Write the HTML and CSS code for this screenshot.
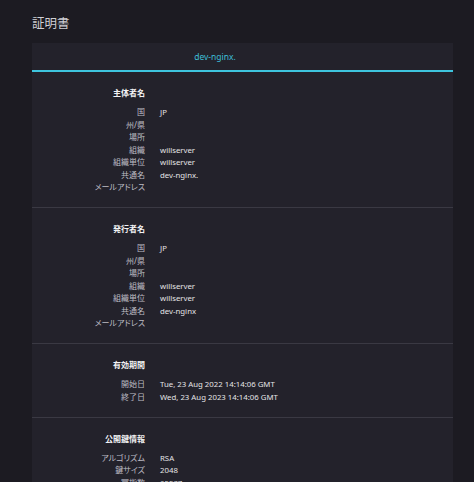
FILE: index.html
```html
<!DOCTYPE html>
<html lang="ja">
<head>
<meta charset="UTF-8" />
<title>証明書</title>
<link rel="stylesheet" href="styles.css">
</head>
<body>
  <h1 class="page-title">証明書</h1>
  <div class="cert">
    <div class="tabs">
      <div class="tab active">dev-nginx.</div>
    </div>

    <section class="group">
      <div class="group-title">主体者名</div>
      <div class="rows">
        <div class="label">国</div><div class="value">JP</div>
        <div class="label">州/県</div><div class="value"></div>
        <div class="label">場所</div><div class="value"></div>
        <div class="label">組織</div><div class="value">willserver</div>
        <div class="label">組織単位</div><div class="value">willserver</div>
        <div class="label">共通名</div><div class="value">dev-nginx.</div>
        <div class="label">メールアドレス</div><div class="value"></div>
      </div>
    </section>

    <section class="group">
      <div class="group-title">発行者名</div>
      <div class="rows">
        <div class="label">国</div><div class="value">JP</div>
        <div class="label">州/県</div><div class="value"></div>
        <div class="label">場所</div><div class="value"></div>
        <div class="label">組織</div><div class="value">willserver</div>
        <div class="label">組織単位</div><div class="value">willserver</div>
        <div class="label">共通名</div><div class="value">dev-nginx</div>
        <div class="label">メールアドレス</div><div class="value"></div>
      </div>
    </section>

    <section class="group">
      <div class="group-title">有効期間</div>
      <div class="rows">
        <div class="label">開始日</div><div class="value">Tue, 23 Aug 2022 14:14:06 GMT</div>
        <div class="label">終了日</div><div class="value">Wed, 23 Aug 2023 14:14:06 GMT</div>
      </div>
    </section>

    <section class="group">
      <div class="group-title">公開鍵情報</div>
      <div class="rows">
        <div class="label">アルゴリズム</div><div class="value">RSA</div>
        <div class="label">鍵サイズ</div><div class="value">2048</div>
        <div class="label">冪指数</div><div class="value">65537</div>
      </div>
    </section>
  </div>
</body>
</html>
```

FILE: styles.css
```css
* {
  box-sizing: border-box;
}
body {
  margin: 0;
  padding: 14px 21px 0 32px;
  background: #1c1b22;
  color: #e2e2e6;
  font-family: "Noto Sans", "Noto Sans CJK JP", sans-serif;
  font-feature-settings: "palt";
  overflow: hidden;
}
.page-title {
  margin: 0 0 10px;
  font-size: 12.5px;
  font-weight: 400;
  line-height: 19px;
  color: #cfcfd4;
}
.cert {
  background: #23222b;
  min-height: 600px;
}
.tabs {
  display: flex;
  border-bottom: 2px solid #3ec5de;
}
.tab {
  width: 366px;
  height: 27px;
  line-height: 28px;
  text-align: center;
  font-size: 8.5px;
  color: #3ebfd8;
}
.group {
  padding: 15px 0 13.5px;
  border-bottom: 1px solid #3a3943;
}
.group-title {
  width: 113px;
  text-align: right;
  font-size: 8px;
  font-weight: 700;
  line-height: 12.5px;
  color: #f2f2f4;
  margin-bottom: 6.5px;
}
.rows {
  display: grid;
  grid-template-columns: 113px 1fr;
  column-gap: 15px;
  font-size: 8px;
  line-height: 12.5px;
}
.label {
  text-align: right;
  color: #bdbcc4;
}
.value {
  font-size: 7.8px;
  color: #e4e4e6;
  min-height: 12.5px;
}
```
